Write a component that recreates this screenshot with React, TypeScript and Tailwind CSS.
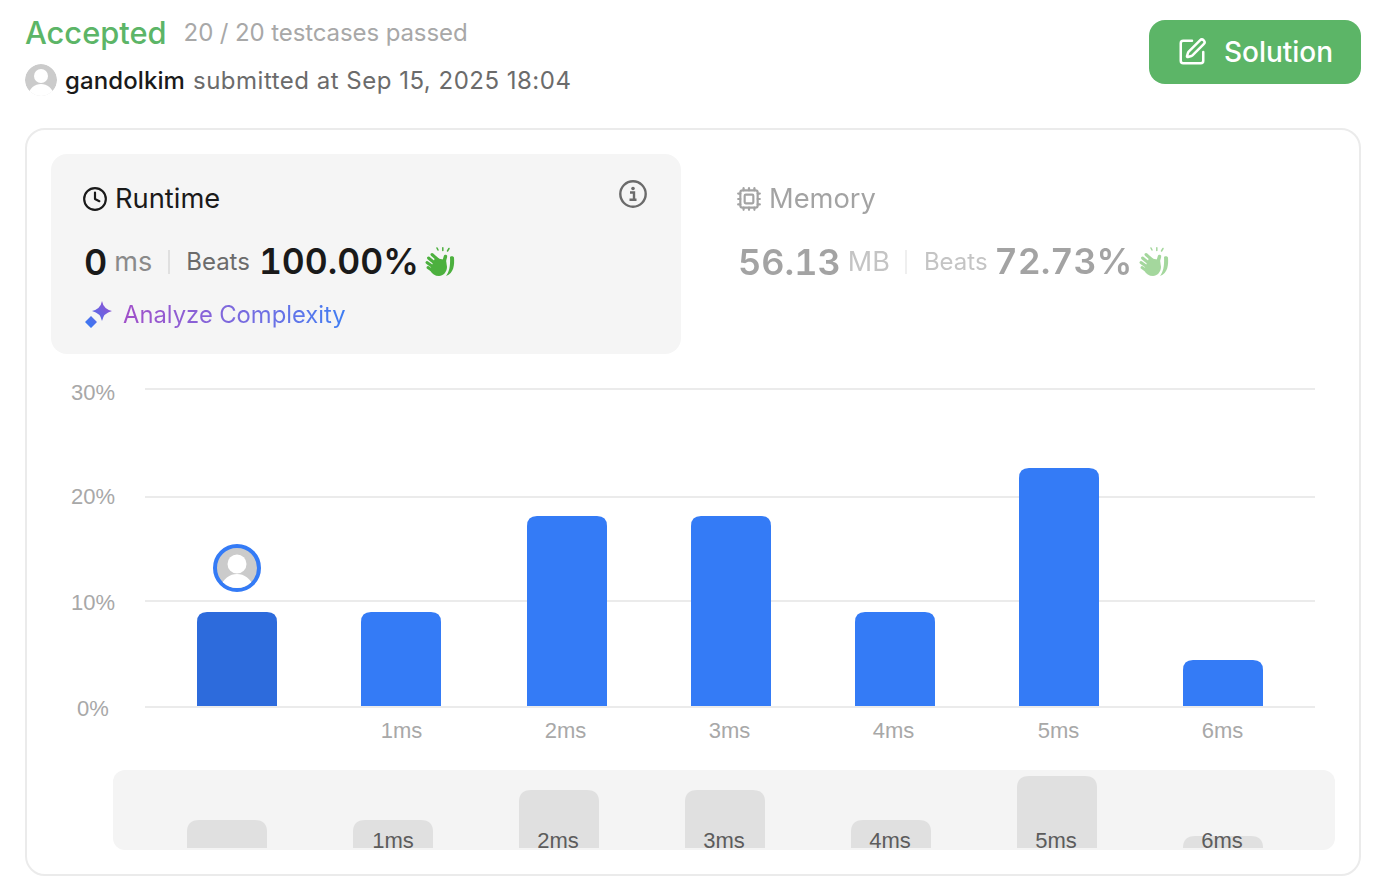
import { Clock, Cpu, SquarePen } from 'lucide-react'

const bars = [
  { x: 197, top: 612, label: '', lx: 0, color: '#2d6bdc' },
  { x: 361, top: 612, label: '1ms', lx: 401.5, color: '#347bf6' },
  { x: 527, top: 516, label: '2ms', lx: 565.5, color: '#347bf6' },
  { x: 691, top: 516, label: '3ms', lx: 729.5, color: '#347bf6' },
  { x: 855, top: 612, label: '4ms', lx: 893.5, color: '#347bf6' },
  { x: 1019, top: 468, label: '5ms', lx: 1058.5, color: '#347bf6' },
  { x: 1183, top: 660, label: '6ms', lx: 1222.5, color: '#347bf6' },
]

const miniBars = [
  { x: 187, top: 820, label: '', lx: 0 },
  { x: 353, top: 820, label: '1ms', lx: 393 },
  { x: 519, top: 790, label: '2ms', lx: 558 },
  { x: 685, top: 790, label: '3ms', lx: 724 },
  { x: 851, top: 820, label: '4ms', lx: 890 },
  { x: 1017, top: 776, label: '5ms', lx: 1056 },
  { x: 1183, top: 836, label: '6ms', lx: 1222 },
]

const grid = [
  { y: 389, label: '30%', tx: 71, ty: 400 },
  { y: 497, label: '20%', tx: 71, ty: 504 },
  { y: 601, label: '10%', tx: 71, ty: 610 },
  { y: 707, label: '0%', tx: 77, ty: 716 },
]

function topRounded(x: number, top: number, bottom: number, r: number) {
  const w = 80
  const rr = Math.min(r, bottom - top)
  return `M${x} ${bottom}V${top + rr}Q${x} ${top} ${x + rr} ${top}H${x + w - rr}Q${x + w} ${top} ${x + w} ${top + rr}V${bottom}Z`
}

function ClapIcon({ className }: { className: string }) {
  return (
    <svg viewBox="0 0 30 30" className={className} fill="currentColor" stroke="none">
      <g stroke="currentColor" strokeWidth="3" strokeLinecap="round">
        <path d="M7 7.500l8 7" />
        <path d="M3.500 11l8 6.500" />
        <path d="M2 15.500l7 5" />
        <path d="M3 20.500l5 3.500" />
        <path d="M20.500 9.500l-2 7" strokeWidth="3.500" />
      </g>
      <path d="M10 11l11 2 1 7c0 5-4 9-8 9-4 0-7-2-9-6z" />
      <path d="M25 10c.5-1 3.500-1 4 .5.500 7.500 0 15.500-8 18.500 3-4 4.500-9 4-19z" />
      <g stroke="currentColor" strokeWidth="1.500" strokeLinecap="round">
        <path d="M12 1l1 2" />
        <path d="M17.800 .800v2.700" />
        <path d="M24 1.500l-1.500 2.500" />
      </g>
    </svg>
  )
}

function SparkIcon() {
  return (
    <svg viewBox="0 0 28 28" className="h-7 w-7">
      <defs>
        <linearGradient id="spark" x1="0" y1="1" x2="1" y2="0">
          <stop offset="0" stopColor="#2f7cf6" />
          <stop offset="1" stopColor="#9a4fd0" />
        </linearGradient>
      </defs>
      <path
        fill="url(#spark)"
        d="M17 0Q18.500 8 27 10Q18.500 12 17 20Q15.500 12 7 10Q15.500 8 17 0ZM6 15L12 21L6 27L0 21Z"
      />
    </svg>
  )
}

function InfoIcon() {
  return (
    <svg viewBox="0 0 28 28" className="h-7 w-7 text-[#6b6b6b]" fill="none" stroke="currentColor">
      <circle cx="14" cy="14" r="12.700" strokeWidth="2.400" />
      <circle cx="14" cy="8.500" r="1.800" fill="currentColor" stroke="none" />
      <path d="M11 12.500h4v7M10.500 19.800h7" strokeWidth="2.400" />
    </svg>
  )
}

export default function App() {
  return (
    <div className="h-[884px] w-[1382px] overflow-hidden bg-white font-['Inter',sans-serif]">
      <div className="flex h-[128px] justify-between pl-[25px] pr-[21px] pt-[20px]">
        <div>
          <div className="flex h-[26px] items-center">
            <span className="text-[30.800px] font-medium text-[#5cb567]">Accepted</span>
            <span className="ml-[17px] text-[24px] tracking-[-0.1px] text-[#a8a8a8]">20 / 20 testcases passed</span>
          </div>
          <div className="mt-[18px] flex h-[32px] items-center">
            <svg viewBox="0 0 32 32" className="h-[32px] w-[32px] rounded-full">
              <circle cx="16" cy="16" r="16" fill="#cbcbcb" />
              <circle cx="16" cy="12" r="7" fill="#fff" />
              <path d="M3 32c1-8 7-12 13-12s12 4 13 12z" fill="#fff" />
            </svg>
            <span className="ml-[8px] translate-y-[1px] text-[24px] font-medium tracking-[0.1px] text-[#1a1a1a]">gandolkim</span>
            <span className="ml-[8px] translate-y-[1px] text-[24px] tracking-[0.5px] text-[#6b6b6b]">
              submitted at Sep 15, 2025 18:04
            </span>
          </div>
        </div>
        <button className="flex h-[64px] w-[212px] items-center justify-center gap-[17px] rounded-[16px] bg-[#5cb567] text-[28px] font-medium text-white">
          <SquarePen size={30} strokeWidth={2} />
          Solution
        </button>
      </div>

      <div className="mx-[25px] h-[748px] w-[1336px] rounded-[20px] border-2 border-[#ebebeb] pl-[24px] pt-[24px]">
        <div className="flex">
          <div className="h-[200px] w-[630px] rounded-[16px] bg-[#f5f5f5] pl-[31px] pr-[34px] pt-[28px] tabular-nums">
            <div className="flex items-start justify-between">
              <div className="mt-[1px] flex h-[32px] items-center gap-[7px] text-[27.300px] text-[#1a1a1a]">
                <Clock size={26} strokeWidth={2} />
                Runtime
              </div>
              <div className="-mt-[2px]">
                <InfoIcon />
              </div>
            </div>
            <div className="mt-[29px] flex h-[36px] items-center text-[#1a1a1a]">
              <span className="ml-[2px] text-[36px] font-semibold">0</span>
              <span className="ml-[7px] text-[27px] text-[#8a8a8a]">ms</span>
              <span className="mx-[16px] h-[24px] w-[2px] bg-[#e0e0e0]" />
              <span className="text-[24px] text-[#6b6b6b]">Beats</span>
              <span className="ml-[9px] text-[35.500px] font-semibold">100.00%</span>
              <ClapIcon className="ml-[6px] h-[30px] w-[30px] text-[#4cb03e]" />
            </div>
            <div className="mt-[19px] flex h-[32px] items-center gap-[10px]">
              <div className="ml-[3px]">
                <SparkIcon />
              </div>
              <span className="bg-linear-to-r from-[#a14fc9] to-[#3b7df3] bg-clip-text text-[23.800px] text-transparent">
                Analyze Complexity
              </span>
            </div>
          </div>
          <div className="pl-[55px] pt-[28px] tabular-nums opacity-50">
            <div className="mt-[1px] flex h-[32px] items-center gap-[7px] text-[27.300px] text-[#4a4a4a]">
              <Cpu size={26} strokeWidth={2} />
              Memory
            </div>
            <div className="mt-[29px] flex h-[36px] items-center text-[#4a4a4a]">
              <span className="ml-[2px] text-[36px] font-semibold">56.13</span>
              <span className="ml-[7px] text-[27px] text-[#8a8a8a]">MB</span>
              <span className="ml-[15px] mr-[17px] h-[24px] w-[2px] bg-[#e0e0e0]" />
              <span className="text-[24px] text-[#8a8a8a]">Beats</span>
              <span className="ml-[7px] text-[35.700px] font-semibold">72.73%</span>
              <ClapIcon className="ml-[7px] h-[30px] w-[30px] text-[#4cb03e]" />
            </div>
          </div>
        </div>

        <svg viewBox="27 354 1334 520" className="-ml-[24px] block h-[520px] w-[1334px] font-['Liberation_Sans',sans-serif]">
          <defs>
            <clipPath id="mini">
              <rect x="113" y="770" width="1222" height="78" />
            </clipPath>
            <clipPath id="pin">
              <circle cx="237" cy="568" r="20" />
            </clipPath>
          </defs>
          {grid.map((g) => (
            <g key={g.y}>
              <rect x="145" y={g.y - 1} width="1170" height="2" fill="#ebebeb" />
              <text x={g.tx} y={g.ty} fontSize="22" fill="#a8a8a8">
                {g.label}
              </text>
            </g>
          ))}
          {bars.map((b) => (
            <g key={b.x}>
              <path d={topRounded(b.x, b.top, 706, 10)} fill={b.color} />
              {b.label && (
                <text x={b.lx} y="738" fontSize="22" fill="#a8a8a8" textAnchor="middle">
                  {b.label}
                </text>
              )}
            </g>
          ))}
          <circle cx="237" cy="568" r="22" fill="#cbcbcb" stroke="#347bf6" strokeWidth="4" />
          <g clipPath="url(#pin)">
            <circle cx="237" cy="564" r="9.500" fill="#fff" />
            <path d="M219 592c2-12 10-18 18-18s16 6 18 18z" fill="#fff" />
          </g>
          <rect x="113" y="770" width="1222" height="80" rx="12" fill="#f4f4f4" />
          <g clipPath="url(#mini)">
            {miniBars.map((b) => (
              <path key={b.x} d={topRounded(b.x, b.top, 848, 12)} fill="#e0e0e0" />
            ))}
          </g>
          {miniBars.map(
            (b) =>
              b.label && (
                <text key={b.x} x={b.lx} y="848" fontSize="22" fill="#5c5c5c" textAnchor="middle">
                  {b.label}
                </text>
              ),
          )}
        </svg>
      </div>
    </div>
  )
}
